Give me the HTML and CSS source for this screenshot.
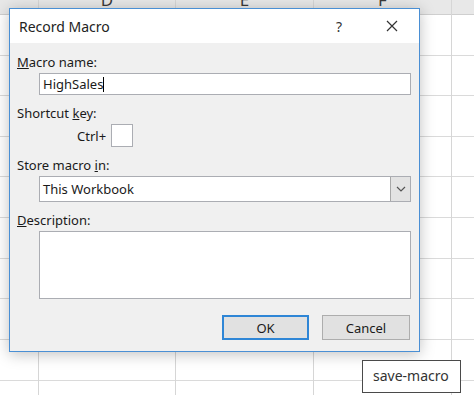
FILE: index.html
```html
<!DOCTYPE html>
<html lang="en">
<head>
  <meta charset="UTF-8" />
  <title>Record Macro</title>
  <link rel="stylesheet" href="styles.css">
</head>
<body>

  <div class="sheet">
    <div class="column col-c"><div class="col-head"></div></div>
    <div class="column col-d"><div class="col-head">D</div></div>
    <div class="column col-e"><div class="col-head">E</div></div>
    <div class="column col-f"><div class="col-head">F</div></div>
    <div class="column col-g"><div class="col-head"></div></div>
  </div>

  <div class="dialog">
    <div class="title-bar">
      <span class="title">Record Macro</span>
      <span class="help">?</span>
      <span class="close">
        <svg width="12" height="12" viewBox="0 0 12 12"><path d="M1 1 L11 11 M11 1 L1 11" stroke="#333" stroke-width="1.2" fill="none"/></svg>
      </span>
    </div>

    <div class="dialog-body">
      <label class="field-label"><u>M</u>acro name:</label>
      <div class="text-box">HighSales<span class="caret"></span></div>

      <label class="field-label gap">Shortcut <u>k</u>ey:</label>
      <div class="shortcut-row">
        <span>Ctrl+</span>
        <div class="key-box"></div>
      </div>

      <label class="field-label gap">Store macro <u>i</u>n:</label>
      <div class="select-box">
        <span class="select-text">This Workbook</span>
        <span class="select-btn">
          <svg width="10" height="6" viewBox="0 0 10 6"><path d="M1 1 L5 5 L9 1" stroke="#555" stroke-width="1.2" fill="none"/></svg>
        </span>
      </div>

      <label class="field-label gap"><u>D</u>escription:</label>
      <div class="desc-box"></div>

      <div class="buttons">
        <button class="btn btn-ok">OK</button>
        <button class="btn">Cancel</button>
      </div>
    </div>
  </div>

  <div class="caption">save-macro</div>

</body>
</html>
```

FILE: styles.css
```css
  body {
    margin: 0;
    width: 474px;
    height: 395px;
    overflow: hidden;
    position: relative;
    background-color: #ffffff;
    font-family: "Noto Sans", "Open Sans", sans-serif;
  }

  /* spreadsheet behind the dialog */
  .sheet {
    display: flex;
    height: 395px;
    background-image: repeating-linear-gradient(to bottom, transparent 0, transparent 39.6px, #dadada 39.6px, #dadada 40.625px);
    background-position: 0 15px;
    background-repeat: repeat-y;
  }

  .column {
    border-right: 1px solid #d6d6d6;
  }

  .col-c { width: 38px; }
  .col-d { width: 136px; }
  .col-e { width: 137px; }
  .col-f { width: 137px; }
  .col-g { flex: 1; border-right: none; }

  .col-head {
    background-color: #e8e8e8;
    border-bottom: 1px solid #cfcfcf;
    height: 14px;
    overflow: hidden;
    text-align: center;
    font-size: 17px;
    line-height: 0px;
    color: #3a3a3a;
  }

  .dialog {
    position: absolute;
    left: 9px;
    top: 8px;
    width: 409px;
    height: 342px;
    border: 1px solid #4a8fd4;
    background-color: #f0f0f0;
    box-shadow: 0 2px 14px rgba(0,0,0,0.25);
    font-size: 13px;
    color: #1a1a1a;
  }

  .title-bar {
    display: flex;
    align-items: center;
    height: 34px;
    background-color: #ffffff;
    padding-left: 9px;
  }

  .title {
    font-size: 14px;
    color: #222;
    flex: 1;
  }

  .help {
    font-size: 14px;
    color: #333;
    width: 20px;
    margin-right: 30px;
  }

  .close {
    width: 12px;
    margin-right: 21px;
    display: flex;
  }

  .dialog-body {
    padding: 11px 8px 11px 7px;
  }

  .field-label {
    display: block;
    height: 16px;
    line-height: 16px;
    margin-bottom: 3px;
  }

  .field-label.gap {
    margin-top: 10px;
  }

  .text-box {
    margin-left: 22px;
    height: 20px;
    line-height: 20px;
    border: 1px solid #abadb3;
    background: #ffffff;
    padding-left: 3px;
  }

  .caret {
    display: inline-block;
    width: 1px;
    height: 15px;
    background: #000;
    vertical-align: -3px;
  }

  .shortcut-row {
    display: flex;
    align-items: center;
    margin-top: 1px;
    padding-left: 60px;
    gap: 5px;
    height: 23px;
  }

  .key-box {
    width: 20px;
    height: 21px;
    border: 1px solid #abadb3;
    background: #ffffff;
  }

  .select-box {
    margin-left: 22px;
    height: 24px;
    border: 1px solid #abadb3;
    background: #ffffff;
    display: flex;
    align-items: center;
  }

  .select-text {
    flex: 1;
    padding-left: 3px;
  }

  .select-btn {
    width: 19px;
    height: 24px;
    background-color: #e3e3e3;
    border-left: 1px solid #a8a8a8;
    display: flex;
    align-items: center;
    justify-content: center;
  }

  .desc-box {
    margin-left: 22px;
    height: 66px;
    border: 1px solid #abadb3;
    background: #ffffff;
  }

  .buttons {
    display: flex;
    justify-content: flex-end;
    gap: 13px;
    margin-top: 16px;
    padding-right: 1px;
  }

  .btn {
    width: 88px;
    height: 25px;
    background-color: #e1e1e1;
    border: 1px solid #adadad;
    font-family: "Noto Sans", "Open Sans", sans-serif;
    font-size: 13px;
    color: #1a1a1a;
    padding: 0;
  }

  .btn-ok {
    width: 87px;
    border: 2px solid #2f86d6;
  }

  .caption {
    position: absolute;
    left: 362px;
    top: 360px;
    width: 87px;
    height: 31px;
    padding-left: 10px;
    border: 1px solid #4a4a4a;
    background: #ffffff;
    font-size: 14px;
    line-height: 30px;
    color: #333;
  }
```
